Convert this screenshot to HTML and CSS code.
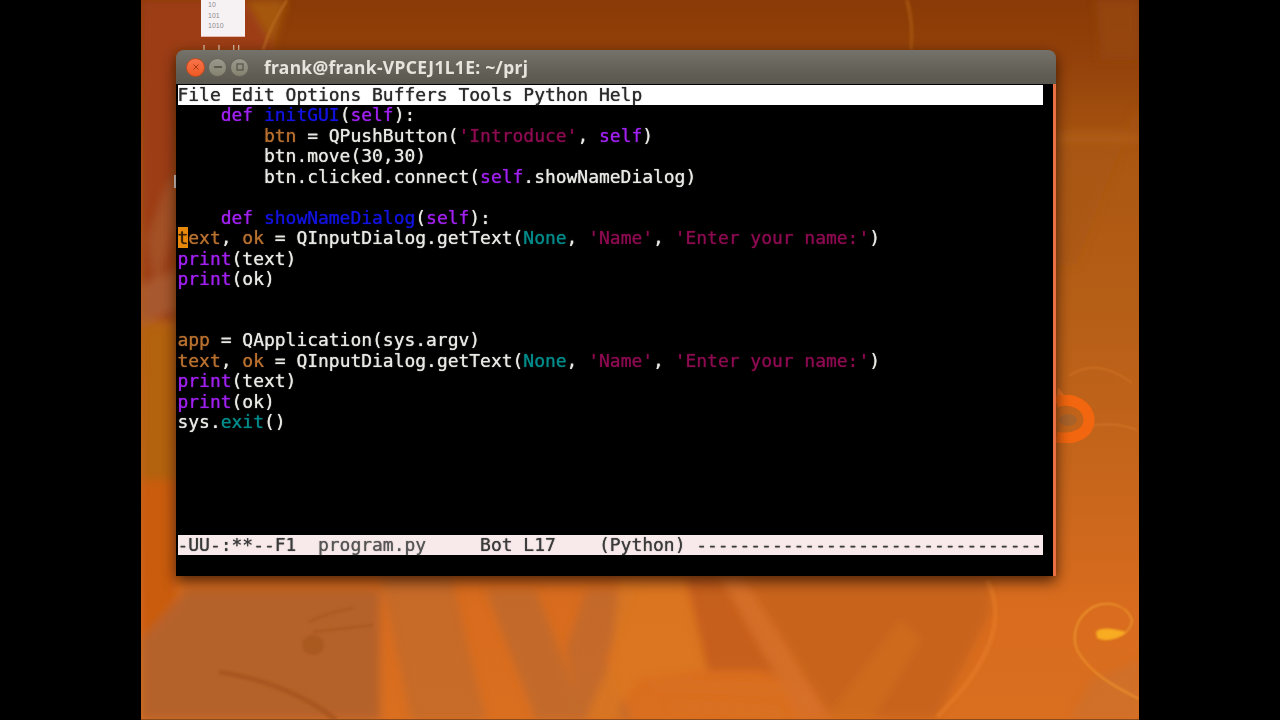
FILE: index.html
```html
<!DOCTYPE html>
<html lang="en">

<head>
    <meta charset="UTF-8">
    <title>frank@frank-VPCEJ1L1E: ~/prj</title>
    <link rel="stylesheet" href="styles.css">
</head>

<body>
    <div class="desktop">
        <!-- wallpaper shapes, coordinates are desktop pixels -->
        <svg class="swirls" width="998" height="720" viewBox="0 0 998 720">
            <defs>
                <filter id="soft"><feGaussianBlur stdDeviation="4"/></filter>
                <filter id="softer"><feGaussianBlur stdDeviation="1"/></filter>
            </defs>
            <g filter="url(#soft)">
                <!-- top left red corner and light wedges -->
                <path d="M0 0H105L135 50H35V320H0Z" fill="#9c3c14"/>
                <path d="M105 0H146L130 50H135Z" fill="#a5580f"/>
                <path d="M6 240L24 190L35 170V225L15 290Z" fill="#a85a2e" opacity="0.7"/>
                <path d="M0 285L35 270V310L0 325Z" fill="#ae6438" opacity="0.7"/>
                <path d="M0 325H35V480H0Z" fill="#b3620f"/>
                <path d="M0 480H35V600L0 640Z" fill="#c95c0e"/>
                <path d="M955 0H998V60H960Z" fill="#96470f" opacity="0.8"/>
                <!-- upper right wedge -->
                <path d="M915 130H998V108L994 110L935 265H915Z" fill="#a8560f" opacity="0.5"/>
                <path d="M915 135H1000V142H915Z" fill="#bb6a22" opacity="0.5"/>
                <!-- bottom left tan area -->
                <path d="M0 640L45 590H239L239 720H0Z" fill="#b5622a"/>
                <path d="M239 575H310L345 720H270Z" fill="#b56a30" opacity="0.5"/>
                <path d="M345 590H395L445 720H395Z" fill="#b96a30" opacity="0.7"/>
                <path d="M445 590H495L465 660L490 720H440L425 650Z" fill="#ba6a30" opacity="0.7"/>
                <!-- bottom right shapes -->
                <path d="M479 577H542L566 670L499 680L479 703V720H445L470 660Z" fill="#dc7820" opacity="0.8"/>
                <path d="M546 577H602L666 693L622 670L566 670Z" fill="#bd5a17" opacity="0.7"/>
                <path d="M602 577H845L850 610L796 718H690Z" fill="#c8631c"/>
                <path d="M579 577H602L689 718H659Z" fill="#d67028" opacity="0.9"/>
                <path d="M760 620L700 700L680 720H730L780 640Z" fill="#d2701f" opacity="0.6"/>
                <path d="M512 685L640 690M530 705L640 712" stroke="#d67c2c" stroke-width="4" opacity="0.6"/>
                <path d="M950 680L998 660V720H930Z" fill="#c87030" opacity="0.5"/>
            </g>
            <g fill="none" filter="url(#softer)">
                <path d="M122 50C128 30 138 12 146 0" stroke="#b86a20" stroke-width="2"/>
                <path d="M770 50C772 30 770 15 766 0" stroke="#a0500f" stroke-width="4"/>
                <path d="M846 580C864 613 856 657 796 717" stroke="#e8802a" stroke-width="5" opacity="0.5"/>
                <path d="M213 608C190 612 175 618 168 622M232 625C205 628 190 630 172 632" stroke="#a5561f" stroke-width="3" opacity="0.6"/>
                <path d="M78 672C120 678 165 695 195 720" stroke="#a5521a" stroke-width="5" opacity="0.7"/>
                <path d="M928 376C945 364 965 364 991 383" stroke="#e88a3a" stroke-width="1" opacity="0.7"/>
                <path d="M950 426C965 423 980 424 996 430" stroke="#e88a3a" stroke-width="1" opacity="0.7"/>
                <path d="M998 699C975 687 950 675 936 650C930 635 936 616 952 607C965 601 985 603 991 620C990 632 980 638 962 638" stroke="#f09a30" stroke-width="1.5"/>
            </g>
            <ellipse cx="172" cy="645" rx="11" ry="10" fill="#a5561f" opacity="0.7" filter="url(#softer)"/>
            <path d="M955 632C960 627 970 628 985 632C978 640 962 642 956 638Z" fill="#f8ac22" filter="url(#softer)"/>
        </svg>
        <svg class="ring" width="40" height="56" viewBox="0 0 40 56">
            <path d="M2 0L8 8L6 14L0 14Z" fill="#e8701f"/>
            <ellipse cx="12" cy="33" rx="9" ry="6" fill="#a8622a"/>
            <path d="M0 15C18 9 33 20 33 33C33 46 18 54 0 50" fill="none" stroke="#f2660f" stroke-width="11"/>
        </svg>

        <div class="file-icon">
            <span>10</span>
            <span>101</span>
            <span>1010</span>
        </div>
        <div class="file-name">l l ll</div>
        <div class="cursor-sliver"></div>

        <div class="window">
            <div class="titlebar">
                <div class="win-btn close">
                    <svg width="8" height="8" viewBox="0 0 8 8"><path d="M1.5 1.5L6.5 6.5M6.5 1.5L1.5 6.5" stroke="#a83a14" stroke-width="1"/></svg>
                </div>
                <div class="win-btn">
                    <svg width="10" height="8" viewBox="0 0 10 8"><path d="M1 4H9" stroke="#4c4a42" stroke-width="1.5"/></svg>
                </div>
                <div class="win-btn">
                    <svg width="8" height="8" viewBox="0 0 8 8"><rect x="1" y="1" width="6" height="6" fill="none" stroke="#55534a" stroke-width="1.2"/></svg>
                </div>
                <div class="win-title">frank@frank-VPCEJ1L1E: ~/prj</div>
            </div>
            <div class="term-wrap">
                <div class="terminal">
                    <div class="line menu">File Edit Options Buffers Tools Python Help</div>
                    <div class="line">    <span class="kw">def</span> <span class="fn">initGUI</span>(<span class="kw">self</span>):</div>
                    <div class="line">        <span class="var">btn</span> = QPushButton(<span class="str">'Introduce'</span>, <span class="kw">self</span>)</div>
                    <div class="line">        btn.move(30,30)</div>
                    <div class="line">        btn.clicked.connect(<span class="kw">self</span>.showNameDialog)</div>
                    <div class="line"> </div>
                    <div class="line">    <span class="kw">def</span> <span class="fn">showNameDialog</span>(<span class="kw">self</span>):</div>
                    <div class="line"><span class="cursor">t</span><span class="var">ext</span>, <span class="var">ok</span> = QInputDialog.getText(<span class="const">None</span>, <span class="str">'Name'</span>, <span class="str">'Enter your name:'</span>)</div>
                    <div class="line"><span class="kw">print</span>(text)</div>
                    <div class="line"><span class="kw">print</span>(ok)</div>
                    <div class="line"> </div>
                    <div class="line"> </div>
                    <div class="line"><span class="var">app</span> = QApplication(sys.argv)</div>
                    <div class="line"><span class="var">text</span>, <span class="var">ok</span> = QInputDialog.getText(<span class="const">None</span>, <span class="str">'Name'</span>, <span class="str">'Enter your name:'</span>)</div>
                    <div class="line"><span class="kw">print</span>(text)</div>
                    <div class="line"><span class="kw">print</span>(ok)</div>
                    <div class="line">sys.<span class="const">exit</span>()</div>
                    <div class="spacer"></div>
                    <div class="line modeline">-UU-:**--F1  <b>program.py</b>     Bot L17    (Python) --------------------------------</div>
                </div>
                <div class="scrollbar"></div>
            </div>
        </div>
    </div>
</body>

</html>
```

FILE: styles.css
```css
* {
    margin: 0;
    padding: 0;
    box-sizing: border-box;
}

body {
    width: 1280px;
    height: 720px;
    background: #000;
    display: flex;
    justify-content: center;
    overflow: hidden;
    font-family: "DejaVu Sans Mono", "Liberation Mono", monospace;
}

.desktop {
    position: relative;
    width: 998px;
    height: 720px;
    padding: 50px 83px 0 35px;
    overflow: hidden;
    border-bottom: 1px solid #8a4a1a;
    background: linear-gradient(180deg, #8a3a06 0, #93410a 8%, #ab5712 22%, #b75f17 45%, #c8661c 68%, #d96c1e 85%, #da6f20 100%);
}

.swirls,
.ring {
    position: absolute;
}

.swirls {
    left: 0;
    top: 0;
}

.ring {
    left: 915px;
    top: 387px;
    filter: blur(0.7px);
}

.file-icon {
    position: absolute;
    left: 60px;
    top: 0;
    width: 44px;
    height: 37px;
    background: #f6f2f4;
    border-bottom: 1px solid #e8b8b0;
    display: flex;
    flex-direction: column;
    padding-left: 7px;
    font: 7px/10.5px "Liberation Sans", sans-serif;
    color: #8c8a8e;
}

.file-name {
    position: absolute;
    left: 62px;
    top: 44px;
    font: bold 7px/7px "Liberation Sans", sans-serif;
    letter-spacing: 3px;
    word-spacing: 5px;
    color: #e8d8c8;
}

.cursor-sliver {
    position: absolute;
    left: 33px;
    top: 175px;
    width: 2px;
    height: 13px;
    background: #e8e0dc;
}

.window {
    position: relative;
    width: 880px;
    height: 526px;
    display: flex;
    flex-direction: column;
    box-shadow: 0 5px 14px rgba(30, 10, 0, 0.75);
    border-radius: 8px 8px 0 0;
}

.titlebar {
    height: 34px;
    flex-shrink: 0;
    display: flex;
    align-items: center;
    padding: 0 0 0 10px;
    gap: 3px;
    border-radius: 8px 8px 0 0;
    background: linear-gradient(180deg, #74726a 0, #66645a 50%, #59574e 100%);
}

.win-btn {
    width: 19px;
    height: 19px;
    border-radius: 50%;
    display: flex;
    align-items: center;
    justify-content: center;
    background: linear-gradient(180deg, #9a988c, #85836f);
    border: 1px solid #65635a;
}

.win-btn.close {
    background: linear-gradient(180deg, #f9744a, #ee5a25);
    border-color: #c24a20;
}

.win-title {
    margin-left: 12px;
    font: bold 17.5px "Noto Sans", sans-serif;
    letter-spacing: 0.3px;
    color: #e6e4dc;
    filter: blur(0.3px);
}

.term-wrap {
    flex: 1;
    display: flex;
    background: #000;
}

.terminal {
    width: 877px;
    padding: 1px 0 0 1.5px;
    display: flex;
    flex-direction: column;
    color: #e8e8e4;
    font-size: 18px;
    letter-spacing: -0.03px;
    text-shadow: 0 0 1px currentColor;
    filter: blur(0.35px);
}

.line {
    height: 20.45px;
    line-height: 20.45px;
    white-space: pre;
    flex-shrink: 0;
    width: 865.5px;
}

.spacer {
    height: 102.25px;
    flex-shrink: 0;
}

.menu {
    background: #fff;
    color: #2a2a2a;
}

.modeline {
    background: #f8eaea;
    color: #3a3a3a;
}

.modeline b {
    font-weight: normal;
    color: #555;
}

.kw {
    color: #a020f0;
}

.fn {
    color: #1212e0;
}

.str {
    color: #8b0a50;
}

.var {
    color: #b8702f;
}

.const {
    color: #008b8b;
}

.cursor {
    background: #e8890c;
    color: #3a2000;
}

.scrollbar {
    width: 3px;
    background: #ea6f43;
}
```
